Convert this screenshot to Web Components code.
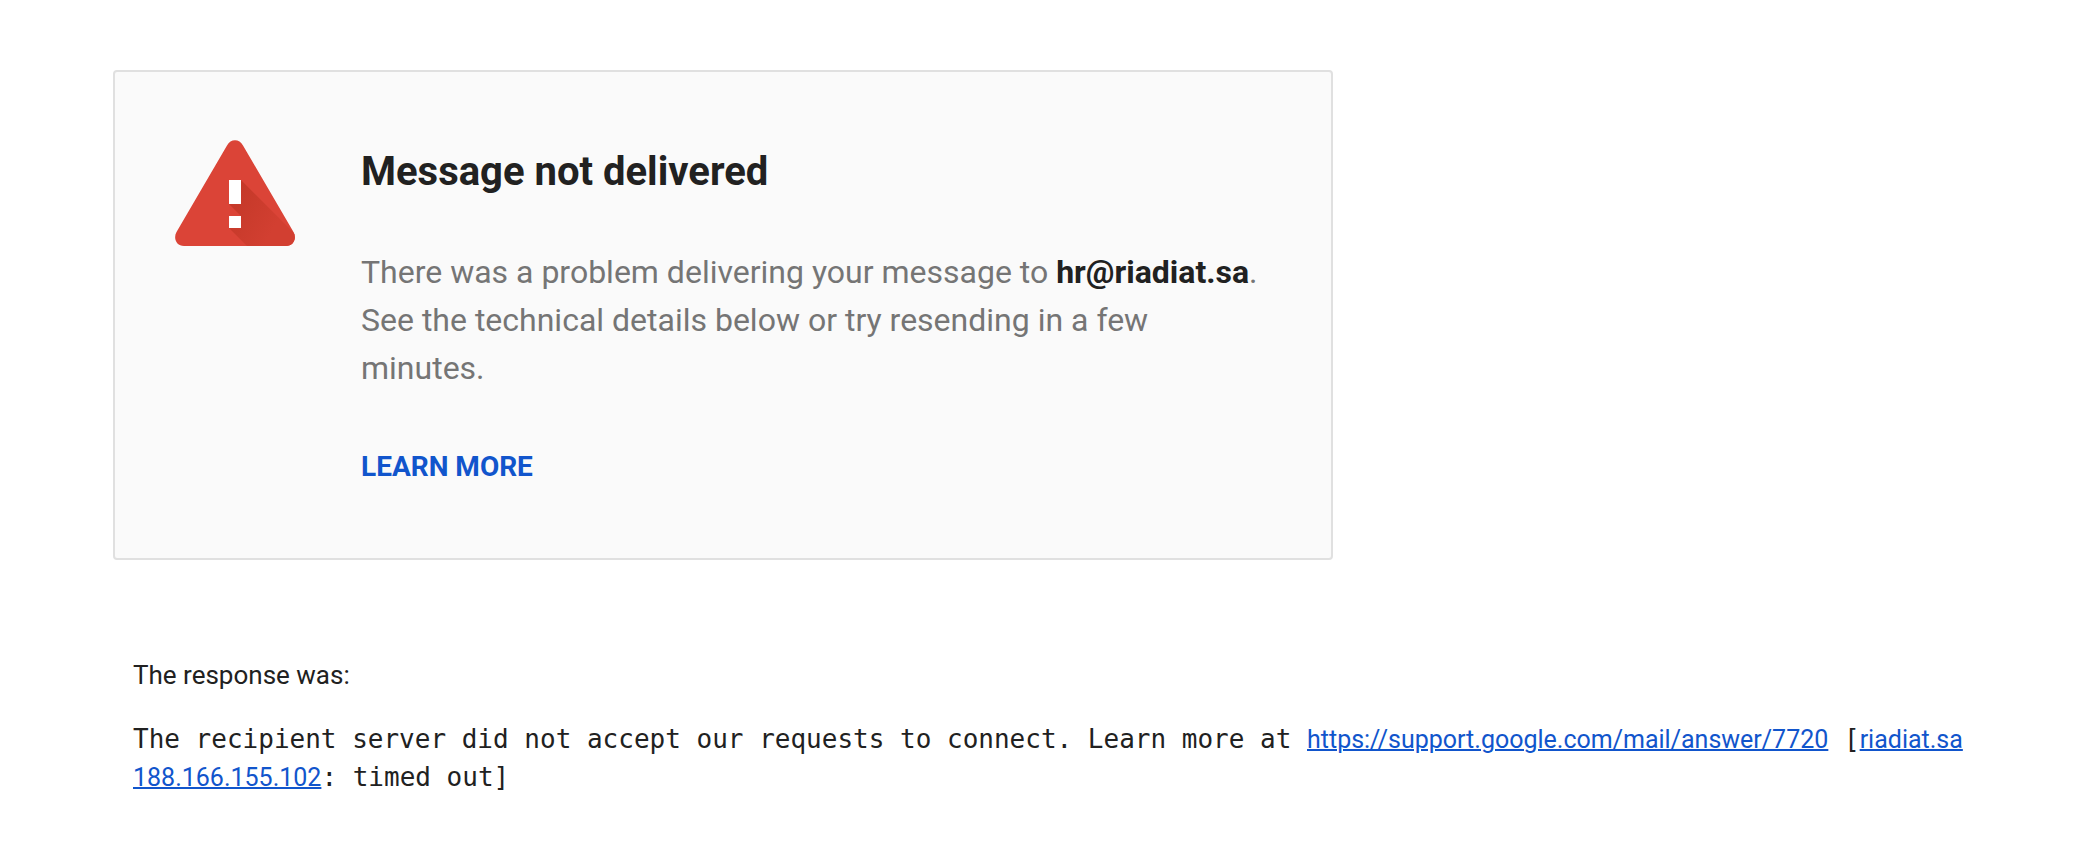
<!DOCTYPE html>
<html lang="en">
<head>
<meta charset="utf-8">
<title>Message not delivered</title>
<style>
  body {
    margin: 0;
    background: #fff;
    color: #212121;
    font-family: Roboto, Arial, sans-serif;
  }
  strong { color: #212121; font-weight: 700; }
</style>
</head>
<body>
<bounce-page>
  <bounce-card href="#learn-more">
    <h1 slot="title">Message not delivered</h1>
    <p slot="message">There was a problem delivering your message to <strong>hr@riadiat.sa</strong>. See the technical details below or try resending in a few minutes.</p>
    <span slot="action">LEARN MORE</span>
  </bounce-card>
  <server-response>
    <span slot="label">The response was:</span>
    The recipient server did not accept our requests to connect. Learn more at <a href="https://support.google.com/mail/answer/7720">https://support.google.com/mail/answer/7720</a> [<a href="#riadiat.sa">riadiat.sa</a> <a href="#188.166.155.102">188.166.155.102</a>: timed out]
  </server-response>
</bounce-page>

<template id="bounce-page">
  <style>
    :host { display: block; }
    main {
      display: flex;
      flex-direction: column;
      gap: 95px;
      padding: 70px 72px 40px 113px;
    }
  </style>
  <main><slot></slot></main>
</template>

<template id="warning-icon">
  <style>
    :host { display: block; width: 120px; flex: none; }
    svg { display: block; width: 100%; }
  </style>
  <svg viewBox="0 0 120 106" role="img" aria-label="Warning">
    <defs>
      <linearGradient id="shade" gradientUnits="userSpaceOnUse" x1="58" y1="62" x2="100" y2="86">
        <stop offset="0" stop-color="#c53929"/>
        <stop offset="1" stop-color="#d23f31"/>
      </linearGradient>
      <clipPath id="sign">
        <path d="M9 106C1.500 106 -2 98.500 1.500 92L52 5.500C55.500 -1.500 64.500 -1.500 68 5.500L118.500 92C122 98.500 118.500 106 111 106Z"/>
      </clipPath>
    </defs>
    <g clip-path="url(#sign)">
      <path fill="#db4437" d="M0 0H120V106H0Z"/>
      <path fill="url(#shade)" d="M66 40L132 106H72L54 88L66 76L54 64Z"/>
    </g>
    <path fill="#fff" d="M54 40H66V64H54ZM54 76H66V88H54Z"/>
  </svg>
</template>

<template id="bounce-card">
  <style>
    :host { display: block; }
    section {
      box-sizing: border-box;
      display: flex;
      gap: 66px;
      max-width: 1220px;
      padding: 68px 60px 75px;
      border: 2px solid #e0e0e0;
      border-radius: 4px;
      background: #fafafa;
    }
    .text {
      flex: 1;
      padding-top: 8px;
    }
    ::slotted(h1) {
      margin: 0 0 52px;
      font-size: 40px;
      line-height: 48px;
      font-weight: 700;
    }
    ::slotted(p) {
      margin: 0 0 59px;
      font-size: 32px;
      line-height: 48px;
      color: #757575;
    }
    a {
      display: block;
      width: max-content;
      color: #15c;
      font-size: 28px;
      line-height: 32px;
      font-weight: 700;
      text-decoration: none;
    }
  </style>
  <section>
    <warning-icon></warning-icon>
    <div class="text">
      <slot name="title"></slot>
      <slot name="message"></slot>
      <a><slot name="action"></slot></a>
    </div>
  </section>
</template>

<template id="server-response">
  <style>
    :host { display: block; padding: 0 20px; }
    p { margin: 0; font-size: 26px; }
    .label { line-height: 40px; margin-bottom: 25px; }
    .detail { font-family: "DejaVu Sans Mono", monospace; line-height: 38px; }
    ::slotted(a) {
      color: #15c;
      font-family: Roboto, Arial, sans-serif;
      font-size: 25px;
      line-height: 1;
      text-decoration-thickness: 2px;
    }
  </style>
  <p class="label"><slot name="label"></slot></p>
  <p class="detail"><slot></slot></p>
</template>

<script>
  class TemplateElement extends HTMLElement {
    constructor() {
      super();
      this.attachShadow({ mode: "open" });
      const template = document.getElementById(this.localName);
      this.shadowRoot.append(template.content.cloneNode(true));
    }
  }

  class BouncePage extends TemplateElement {}
  class WarningIcon extends TemplateElement {}
  class ServerResponse extends TemplateElement {}
  class BounceCard extends TemplateElement {
    connectedCallback() {
      this.shadowRoot.querySelector("a").href = this.getAttribute("href") || "#";
    }
  }

  customElements.define("warning-icon", WarningIcon);
  customElements.define("bounce-card", BounceCard);
  customElements.define("server-response", ServerResponse);
  customElements.define("bounce-page", BouncePage);
</script>
</body>
</html>
